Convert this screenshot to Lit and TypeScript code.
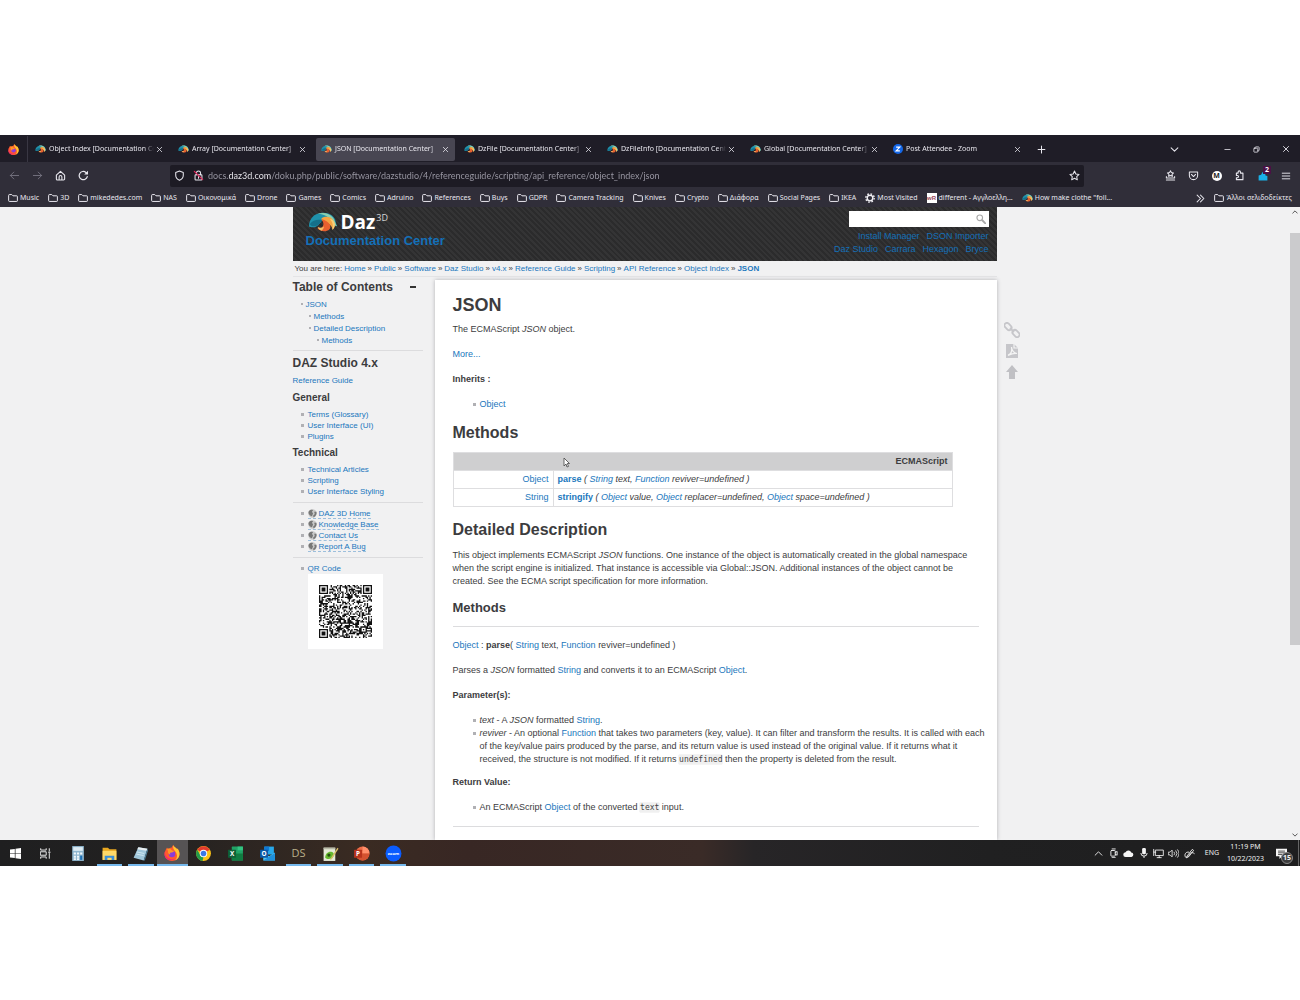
import { LitElement, html, svg, css, nothing } from "lit";
import { customElement } from "lit/decorators.js";

const reset = css`
  *, *::before, *::after { box-sizing: border-box; }
  button, input { font: inherit; color: inherit; border: 0; padding: 0; margin: 0; background: none; outline: 0; }
  button { display: flex; align-items: center; justify-content: center; }
  a { text-decoration: none; color: inherit; }
  svg { display: block; flex: none; }
`;

/* ---------- icons ---------- */

const line = (size: number, body: unknown, width = 1.3) => html`<svg width=${size} height=${size} viewBox="0 0 16 16"
  fill="none" stroke="currentColor" stroke-width=${width} stroke-linecap="round" stroke-linejoin="round" aria-hidden="true">${body}</svg>`;

const icons = {
  back: svg`<path d="M14 8H2M7 3L2 8l5 5"/>`,
  forward: svg`<path d="M2 8h12M9 3l5 5-5 5"/>`,
  home: svg`<path d="M2 7.500L8 2l6 5.500V13a1.500 1.500 0 0 1-1.500 1.500h-9A1.500 1.500 0 0 1 2 13zM6 14v-4a2 2 0 0 1 4 0v4"/>`,
  reload: svg`<path d="M13.500 9.500A6 6 0 1 1 11.500 3.500L13 5"/><path d="M14.500 1v5.500H9z" fill="currentColor" stroke="none"/>`,
  shield: svg`<path d="M8 1.500l5.500 2v4c0 3.500-2.500 6-5.500 7.300C5 13.500 2.500 11 2.500 7.500v-4z"/>`,
  lock: svg`<rect x="3" y="7" width="10" height="7.500" rx="1"/><path d="M5 7V4.500a3 3 0 0 1 6 0V7M8 9.500v2.500"/><path d="M2 2l12 12" stroke="#e2285c" stroke-width="1.800"/>`,
  star: svg`<path d="M8 1.500l2 4.300 4.600.6-3.400 3.200.9 4.700L8 12l-4.100 2.300.9-4.700L1.400 6.400 6 5.800z"/>`,
  save: svg`<path d="M8 1l1.400 2.800 3 .4-2.200 2.100.5 3L8 8 5.300 9.300l.5-3L3.600 4.200l3-.4zM2 9.500v2h12v-2M2 14.500h12"/>`,
  pocket: svg`<path d="M2 3h12v5a6 6 0 0 1-12 0zM5 6.500l3 3 3-3"/>`,
  puzzle: svg`<path d="M6 4.500V3a1.700 1.700 0 0 1 3.400 0v1.500H13V14H3.500v-2.800H5a1.600 1.600 0 0 0 0-3.200H3.500V4.500z"/>`,
  menu: svg`<path d="M2 3.500h12M2 8h12M2 12.500h12"/>`,
  close: svg`<path d="M3 3l10 10M13 3L3 13"/>`,
  plus: svg`<path d="M8 2v12M2 8h12"/>`,
  down: svg`<path d="M2 5l6 6 6-6"/>`,
  up: svg`<path d="M2 11l6-6 6 6"/>`,
  minimize: svg`<path d="M2 8h12"/>`,
  restore: svg`<rect x="2" y="5" width="9" height="9" rx="1"/><path d="M5 5V3.500A1.500 1.500 0 0 1 6.500 2h6A1.500 1.500 0 0 1 14 3.500v6a1.500 1.500 0 0 1-1.500 1.500H11"/>`,
  folder: svg`<path d="M1 3.500a1 1 0 0 1 1-1h4l2 2h6a1 1 0 0 1 1 1v7a1 1 0 0 1-1 1H2a1 1 0 0 1-1-1z"/>`,
  more: svg`<path d="M2 2l6 6-6 6M8 2l6 6-6 6"/>`,
};

const dazHead = (w: number, h: number) => html`<svg width=${w} height=${h} viewBox="0 0 60 40" aria-hidden="true">
  <path d="M2 30C2 12 14 2 29 1c14-1 24 6 27 14 1 4 2 8 4 14-6-1-8-6-12-12-7-5-14-5-19 0-5 7-10 15-20 14-3 0-5-1-7-1z" fill="#1f91ab"/>
  <path d="M20 3C32-1 45 2 52 11c3 4 5 12 8 18-5-1-6-4-9-8C45 10 34 4 20 3z" fill="#8ccfae"/>
  <path d="M4 24c6-8 15-10 25-8-5 8-9 13-16 13-5 0-8-2-9-5z" fill="#15708a"/>
  <path d="M28 12c12-7 25-1 27 12 1 6-2 9-4 12-1-5-3-9-8-12-4-2-9-3-12-6-2-2-3-3-3-6z" fill="#f6a443"/>
  <path d="M28 14c7 2 17 7 18 15 1 5-3 9-9 10-8 1-15-2-18-7 7 2 12-1 13-7 0-4-2-7-4-11z" fill="#e8602f"/>
  <path d="M20 30c4 3 9 3 13-1 0 4-2 7-5 9-4-1-7-4-8-8z" fill="#f2c067"/>
  <path d="M45 14c6 5 8 14 5 22 4-2 7-8 5-14-2-5-5-8-10-8z" fill="#f7cf77"/>
</svg>`;

const zoomFav = html`<svg width="10" height="10" viewBox="0 0 16 16" aria-hidden="true"><circle cx="8" cy="8" r="8" fill="#1467e8"/><path d="M5 5h6l-6 6h6" fill="none" stroke="#fff" stroke-width="1.800"/></svg>`;

const firefox = (s: number) => html`<svg width=${s} height=${s} viewBox="0 0 32 32" aria-hidden="true">
  <path d="M3 11c1-3 2-4 3-6 1 2 2 3 3 3 2-2 4-3 7-3 0-2 1-4 3-5 0 3 3 4 6 7 1 1 2 1 2 0 3 4 4 8 4 11 0 8-7 14-15 14S1 26 1 18c0-3 1-5 2-7z" fill="#ff5a2e"/>
  <path d="M19 0c0 3 3 4 6 7 1 1 2 1 2 0 3 4 4 8 4 11 0 6-4 11-9 13 4-4 5-9 3-14-2-6-9-8-6-17z" fill="#ffc531"/>
  <path d="M3 11c-1 3-2 6 1 11 3 6 12 8 18 5-3 5-21 6-21-9 0-3 1-5 2-7z" fill="#f5286e"/>
  <circle cx="16" cy="18" r="6.500" fill="#8a3bd8"/>
  <path d="M6 8c4-2 8 0 10 3l4 1c-1 3-4 3-6 3s-3 2-1 4c-4 0-6-4-5-7z" fill="#ff9626"/>
</svg>`;

/* ---------- browser window frame ---------- */

const tabs = [
  { title: "Object Index [Documentation Center]", kind: "daz" },
  { title: "Array [Documentation Center]", kind: "daz" },
  { title: "JSON [Documentation Center]", kind: "daz", active: true },
  { title: "DzFile [Documentation Center]", kind: "daz" },
  { title: "DzFileInfo [Documentation Center]", kind: "daz" },
  { title: "Global [Documentation Center]", kind: "daz" },
  { title: "Post Attendee - Zoom", kind: "zoom" },
];

const folders = ["Music", "3D", "mikededes.com", "NAS", "Οικονομικά", "Drone", "Games", "Comics", "Adruino",
  "References", "Buys", "GDPR", "Camera Tracking", "Knives", "Crypto", "Διάφορα", "Social Pages", "IKEA"];

@customElement("browser-chrome")
class BrowserChrome extends LitElement {
  static styles = [reset, css`
    :host { display: block; color: #e8e7ee; font: 7px/12px "Noto Sans", sans-serif; background: #302e39; }
    .strip { display: flex; align-items: center; height: 27px; padding-top: 1px; background: #1f1d27; }
    .view { width: 28px; height: 26px; border-right: 1px solid #393743; flex: none; }
    .tabs { display: flex; flex: 0 1 1001px; min-width: 0; }
    .tab { display: flex; align-items: center; flex: 1 1 0; min-width: 0; height: 23px; margin: 0 2px; padding: 0 5px; border-radius: 2px; }
    .tab.active { background: #484652; }
    .name { flex: 1; min-width: 0; justify-content: flex-start; gap: 3px; overflow: hidden; white-space: nowrap;
      -webkit-mask-image: linear-gradient(90deg, #000 calc(100% - 10px), transparent); }
    .x { width: 10px; height: 16px; flex: none; }
    .new { width: 24px; }
    .window { display: flex; margin-left: auto; align-items: center; }
    .window button { width: 29px; }
    .window .list { width: 30px; margin-right: 24px; }
    .tools { display: flex; align-items: center; height: 27px; padding: 0 3px; }
    .tools > button { width: 23px; }
    .tools > .dim { color: #777582; }
    .url { display: flex; align-items: center; flex: 1; height: 22px; margin: 0 75px 0 75px; padding: 0 4px; gap: 8px; background: #1d1b24; border-radius: 2px; }
    .url input { flex: 1; min-width: 0; font: 9px/16px Lato, sans-serif; height: 16px; margin-left: -4px; color: transparent;
      background: linear-gradient(90deg, #9c9aa6 21px, #f6f5fa 21px 63px, #9c9aa6 63px); -webkit-background-clip: text; background-clip: text; }
    .m { width: 10px; height: 10px; border-radius: 50%; background: #fff; color: #222; font-weight: 700; line-height: 10px; text-align: center; }
    .bell { position: relative; }
    .badge { position: absolute; top: -5px; right: 3px; width: 8px; height: 8px; line-height: 8px; background: #4b1145; color: #fff; font-weight: 700; }
    .marks { display: flex; align-items: center; height: 18px; padding: 0 8px; gap: 9px; white-space: nowrap; }
    .marks a { display: flex; align-items: center; gap: 2px; }
    .rest { margin-left: auto; display: flex; gap: 9px; }
    .wr { width: 10px; height: 10px; background: #fff; color: #9a4a5e; font: 700 6px/10px "Liberation Sans", sans-serif; text-align: center; }
  `];
  render() {
    return html`
      <div class="strip">
        <button class="view" aria-label="Firefox View">${firefox(11)}</button>
        <div class="tabs">
          ${tabs.map(t => html`<div class="tab ${t.active ? "active" : ""}">
            <button class="name">${t.kind === "daz" ? dazHead(11, 8) : zoomFav}<span>${t.title}</span></button>
            <button class="x" aria-label="Close tab">${line(7, icons.close, 1.8)}</button>
          </div>`)}
        </div>
        <button class="new" aria-label="New tab">${line(9, icons.plus, 1.8)}</button>
        <div class="window">
          <button class="list" aria-label="List all tabs">${line(9, icons.down, 1.8)}</button>
          <button aria-label="Minimize">${line(7, icons.minimize, 1.8)}</button>
          <button aria-label="Restore">${line(7, icons.restore, 1.8)}</button>
          <button aria-label="Close">${line(8, icons.close, 1.8)}</button>
        </div>
      </div>
      <div class="tools">
        <button class="dim" aria-label="Back">${line(11, icons.back)}</button>
        <button class="dim" aria-label="Forward">${line(11, icons.forward)}</button>
        <button aria-label="Home">${line(11, icons.home, 1.6)}</button>
        <button aria-label="Reload">${line(11, icons.reload, 1.8)}</button>
        <div class="url">
          ${line(11, icons.shield, 1.5)}${line(11, icons.lock, 1.5)}
          <input aria-label="Address" value="docs.daz3d.com/doku.php/public/software/dazstudio/4/referenceguide/scripting/api_reference/object_index/json">
          <button aria-label="Bookmark this page">${line(11, icons.star, 1.5)}</button>
        </div>
        <button aria-label="Save">${line(11, icons.save, 1.5)}</button>
        <button aria-label="Pocket">${line(11, icons.pocket, 1.5)}</button>
        <button aria-label="Account"><span class="m">M</span></button>
        <button aria-label="Extensions">${line(11, icons.puzzle, 1.6)}</button>
        <button class="bell" aria-label="Notifications"><svg width="10" height="10" viewBox="0 0 16 16" aria-hidden="true"><path d="M1 15V7l4-1 2-4h4l1 5 3 1v7z" fill="#19b1e8"/></svg><span class="badge">2</span></button>
        <button aria-label="Menu">${line(10, icons.menu, 1.5)}</button>
      </div>
      <nav class="marks" aria-label="Bookmarks">
        ${folders.map(f => html`<a href="#">${line(10, icons.folder, 1.6)}<span>${f}</span></a>`)}
        <a href="#"><svg width="10" height="10" viewBox="0 0 16 16" aria-hidden="true"><circle cx="8" cy="8" r="4.500" fill="none" stroke="#f2f1f6" stroke-width="2.200"/><circle cx="8" cy="8" r="6.700" fill="none" stroke="#f2f1f6" stroke-width="2.200" stroke-dasharray="2.600 2.660"/></svg><span>Most Visited</span></a>
        <a href="#"><span class="wr">wR</span><span>different - Αγγλοελλη...</span></a>
        <a href="#">${dazHead(11, 8)}<span>How make clothe "foll...</span></a>
        <div class="rest">
          <button aria-label="More bookmarks">${line(9, icons.more, 1.8)}</button>
          <a href="#">${line(10, icons.folder, 1.6)}<span>Άλλοι σελιδοδείκτες</span></a>
        </div>
      </nav>`;
  }
}

/* ---------- documentation page ---------- */

const QR = 41;
const inFinder = (x: number, y: number) => (x < 8 && y < 8) || (x >= QR - 8 && y < 8) || (x < 8 && y >= QR - 8);
const ring = (x: number, y: number, n: number) => {
  const d = Math.max(Math.abs(x), Math.abs(y));
  return d <= n && d !== n - 1;
};
function qrPath(): string {
  let seed = 20231, d = "";
  for (let y = 0; y < QR; y++) for (let x = 0; x < QR; x++) {
    seed = (seed * 1103515245 + 12345) % 2147483648;
    let on = ((seed >> 16) & 7) > 3;
    if (inFinder(x, y)) {
      const cx = x < 8 ? 3 : QR - 4, cy = y < 8 ? 3 : QR - 4;
      on = ring(x - cx, y - cy, 3);
    } else if (Math.abs(x - 34) <= 2 && Math.abs(y - 34) <= 2) on = ring(x - 34, y - 34, 2);
    else if (x === 6) on = y % 2 === 0;
    else if (y === 6) on = x % 2 === 0;
    if (on) d += `M${x} ${y}h1v1h-1z`;
  }
  return d;
}

const L = (t: string) => html`<a href="#">${t}</a>`;
const crumbs = ["Home", "Public", "Software", "Daz Studio", "v4.x", "Reference Guide", "Scripting", "API Reference", "Object Index"];
const globe = html`<svg width="9" height="9" viewBox="0 0 16 16" aria-hidden="true"><circle cx="8" cy="8" r="7.500" fill="#c9c9c9"/><path d="M1 5c2-4 6-4 8-3L7 5l2 3-2 5C4 12 0 9 1 5zM11 5l4 0c1 4-1 8-5 10l-1-3 3-3z" fill="#777"/></svg>`;

@customElement("doc-page")
class DocPage extends LitElement {
  static styles = [reset, css`
    :host { display: flex; min-height: 0; overflow: hidden; background: #f1f1f2; color: #3c3c3e; font: 9px/13px "Liberation Sans", Arial, sans-serif; }
    a { color: #2177bd; }
    .view { flex: 1; min-width: 0; display: grid; grid-template-columns: 1fr minmax(0, 704px) 1fr; }
    .site { grid-column: 2; display: flex; flex-direction: column; }
    .head { display: flex; justify-content: space-between; height: 54px; padding: 4px 8px 0 13px; background: repeating-linear-gradient(45deg, #2b2b2c 0 2px, #343435 2px 4px); }
    .head a { color: #1470b8; }
    .logo { display: flex; align-items: center; height: 22px; padding-left: 2px; color: #fff; }
    .daz { margin-left: 4px; font: 700 19px/22px "Open Sans", sans-serif; }
    .sup { align-self: flex-start; margin-left: 1px; font: 9px/14px "Open Sans", sans-serif; color: #d5d5d5; }
    .center { font-size: 13px; line-height: 15px; font-weight: 700; }
    .links { display: flex; flex-direction: column; align-items: flex-end; }
    .search { display: flex; width: 140px; height: 16px; margin-bottom: 3px; background: #fff; }
    .search input { flex: 1; min-width: 0; color: #333; padding: 0 4px; }
    .search button { width: 16px; color: #a8a8a8; }
    .row { display: flex; gap: 7px; }
    .crumbs { display: flex; gap: 2px; height: 16px; padding-left: 2px; font-size: 8px; line-height: 16px; border-bottom: 1px solid #e4e4e6; white-space: nowrap; }
    .cols { flex: 1; display: flex; min-height: 0; padding-top: 3px; }
    .side { width: 130px; margin-right: 12px; font-size: 8px; line-height: 11px; flex: none; }
    .side h2 { margin: 0; font-size: 12px; line-height: 14px; display: flex; justify-content: space-between; }
    .side h3 { margin: 5px 0; font-size: 10px; line-height: 12px; }
    .side ul { list-style: none; margin: 0; padding: 0 0 0 15px; }
    .side li::before, .body li::before { content: ""; display: inline-block; width: 3px; height: 3px; margin: 0 4px 1px -7px; background: #b0b0b4; vertical-align: middle; }
    .side .toc { padding: 5px 0 3px 13px; line-height: 12px; border-bottom: 1px solid #dcdcde; margin-bottom: 5px; }
    .side .toc ul { padding-left: 8px; }
    .side .toc li::before { width: 2px; height: 2px; margin: 0 3px 1px -5px; }
    .side .guide { margin: 5px 0; line-height: 12px; }
    .side .sep { border-top: 1px solid #dcdcde; margin-top: 5px; padding-top: 5px; }
    .ext { display: inline-flex; gap: 2px; height: 11px; align-items: center; border-bottom: 1px dashed #9dbfdc; vertical-align: top; }
    .minus { width: 20px; }
    .minus i { width: 6px; height: 2px; background: #333; }
    .qr { margin-left: 15px; background: #fff; width: 75px; }
    .body { position: relative; flex: 1; min-width: 0; padding: 15px 10px 0 18px; background: #fff; box-shadow: 0 0 4px #b0b0b4; }
    .body h1, .body h2, .body h3, .body p { margin: 0; }
    .body h1 { font-size: 18px; line-height: 20px; margin-bottom: 8px; }
    .body h2 { font-size: 16px; line-height: 18px; margin: 13px 0 10px; }
    .body h3 { font-size: 13px; line-height: 16px; margin: 12px 0 10px; }
    .body p, .body ul { margin-bottom: 12px; }
    .body ul { list-style: none; padding-left: 27px; margin-top: 0; }
    .body ul.tight { margin-bottom: 10px; }
    .body hr { border: 0; height: 1px; background: #dcdcde; margin: 0 8px 12px 0; }
    code { font: 8px/11px "DejaVu Sans Mono", monospace; background: #f0f0f0; box-shadow: 0 0 1px #bbb; color: #444; }
    table { width: 95%; max-width: 500px; border-collapse: collapse; margin-bottom: 14px; }
    th { background: #cfcfd0; text-align: right; font-weight: 700; }
    td, th { height: 18px; padding: 0 4px; border: 1px solid #dedee0; line-height: 13px; }
    td:first-child { width: 100px; text-align: right; }
    .sig { font-style: italic; }
    .sig b { font-style: normal; }
    .cursor { position: absolute; left: 128px; top: 177px; }
    .tools { display: flex; flex-direction: column; gap: 5px; padding: 115px 0 0 7px; }
    .bar { display: flex; flex-direction: column; width: 11px; align-items: center; color: #555; }
    .bar button { height: 10px; width: 11px; }
    .track { flex: 1; width: 11px; padding: 16px 0 0 1px; }
    .thumb { height: 69%; background: #cbcbcd; }
  `];
  render() {
    return html`
      <div class="view">
        <div class="site">
          <header class="head">
            <div>
              <div class="logo">${dazHead(29, 20)}<span class="daz">Daz</span><span class="sup">3D</span></div>
              <a class="center" href="#">Documentation Center</a>
            </div>
            <div class="links">
              <form class="search"><input type="text" aria-label="Search"><button type="button" aria-label="Search">
                ${line(10, svg`<circle cx="6" cy="6" r="4.500"/><path d="M10 10l5 5" stroke-width="3"/>`, 1.8)}</button></form>
              <div class="row">${L("Install Manager")}${L("DSON Importer")}</div>
              <div class="row">${L("Daz Studio")}${L("Carrara")}${L("Hexagon")}${L("Bryce")}</div>
            </div>
          </header>
          <nav class="crumbs" aria-label="Breadcrumb"><span>You are here:</span>${crumbs.map(c => html`${L(c)}<span>»</span>`)}<b>${L("JSON")}</b></nav>
          <div class="cols">
            <aside class="side">
              <h2>Table of Contents <button class="minus" aria-label="Collapse"><i></i></button></h2>
              <ul class="toc"><li>${L("JSON")}<ul><li>${L("Methods")}</li><li>${L("Detailed Description")}<ul><li>${L("Methods")}</li></ul></li></ul></li></ul>
              <h2>DAZ Studio 4.x</h2>
              <div class="guide">${L("Reference Guide")}</div>
              <h3>General</h3>
              <ul>${["Terms (Glossary)", "User Interface (UI)", "Plugins"].map(t => html`<li>${L(t)}</li>`)}</ul>
              <h3>Technical</h3>
              <ul>${["Technical Articles", "Scripting", "User Interface Styling"].map(t => html`<li>${L(t)}</li>`)}</ul>
              <div class="sep"><ul>${["DAZ 3D Home", "Knowledge Base", "Contact Us", "Report A Bug"].map(t => html`<li><a class="ext" href="#">${globe}${t}</a></li>`)}</ul></div>
              <div class="sep"><ul><li>${L("QR Code")}</li></ul>
                <div class="qr"><svg width="75" height="75" viewBox="-8.500 -8.500 58 58" role="img" aria-label="QR Code"><path d=${qrPath()} fill="#111"/></svg></div></div>
            </aside>
            <main class="body">
              <h1>JSON</h1>
              <p>The ECMAScript <em>JSON</em> object.</p>
              <p>${L("More...")}</p>
              <p><b>Inherits :</b></p>
              <ul><li>${L("Object")}</li></ul>
              <h2>Methods</h2>
              <table>
                <tr><th colspan="2">ECMAScript</th></tr>
                <tr><td>${L("Object")}</td><td class="sig"><b>${L("parse")}</b> ( ${L("String")} text, ${L("Function")} reviver=undefined )</td></tr>
                <tr><td>${L("String")}</td><td class="sig"><b>${L("stringify")}</b> ( ${L("Object")} value, ${L("Object")} replacer=undefined, ${L("Object")} space=undefined )</td></tr>
              </table>
              <h2>Detailed Description</h2>
              <p>This object implements ECMAScript <em>JSON</em> functions. One instance of the object is automatically created in the global namespace when the script engine is initialized. That instance is accessible via Global::JSON. Additional instances of the object cannot be created. See the ECMA script specification for more information.</p>
              <h3>Methods</h3>
              <hr>
              <p>${L("Object")} : <b>parse</b>( ${L("String")} text, ${L("Function")} reviver=undefined )</p>
              <p>Parses a <em>JSON</em> formatted ${L("String")} and converts it to an ECMAScript ${L("Object")}.</p>
              <p><b>Parameter(s):</b></p>
              <ul class="tight">
                <li><em>text</em> - A <em>JSON</em> formatted ${L("String")}.</li>
                <li><em>reviver</em> - An optional ${L("Function")} that takes two parameters (key, value). It can filter and transform the results. It is called with each of the key/value pairs produced by the parse, and its return value is used instead of the original value. If it returns what it received, the structure is not modified. If it returns <code>undefined</code> then the property is deleted from the result.</li>
              </ul>
              <p><b>Return Value:</b></p>
              <ul><li>An ECMAScript ${L("Object")} of the converted <code>text</code> input.</li></ul>
              <hr>
              <svg class="cursor" width="7" height="11" viewBox="0 0 7 11" aria-hidden="true"><path d="M1 1v8l2-2 1 3 1.500-.6L4.300 6.500h2.200z" fill="#fff" stroke="#444" stroke-width=".8"/></svg>
            </main>
          </div>
        </div>
        <div class="tools">
          <svg width="16" height="16" viewBox="0 0 16 16" fill="none" stroke="#c6c6ca" stroke-width="1.800" aria-hidden="true"><rect x="0" y="2" width="8" height="5" rx="2.500" transform="rotate(45 4 4.500)"/><rect x="8" y="9" width="8" height="5" rx="2.500" transform="rotate(45 12 11.500)"/><path d="M6 6l4 4"/></svg>
          <svg width="16" height="16" viewBox="0 0 16 16" aria-hidden="true"><path d="M2 1h8l4 4v10H2z" fill="#c6c6ca"/><path d="M10 1v4h4M4 12c4-1 4-5 3.500-8C8 9 10 10 13 10.500 9 10 7 11 4 12.500" fill="none" stroke="#f4f4f4" stroke-width="1.200"/></svg>
          <svg width="16" height="16" viewBox="0 0 16 16" aria-hidden="true"><path d="M8 1l6 7h-3v7H5V8H2z" fill="#c0c0c4"/></svg>
        </div>
      </div>
      <div class="bar">
        <button aria-label="Scroll up">${line(6, icons.up, 2.6)}</button>
        <div class="track"><div class="thumb"></div></div>
        <button aria-label="Scroll down">${line(6, icons.down, 2.6)}</button>
      </div>`;
  }
}

/* ---------- taskbar ---------- */

const app = (body: unknown) => html`<svg width="17" height="17" viewBox="0 0 32 32" aria-hidden="true">${body}</svg>`;
const label = (x: number, y: number, size: number, text: string, fill = "#fff") =>
  svg`<text x=${x} y=${y} font-size=${size} font-weight="700" text-anchor="middle" fill=${fill} font-family="Open Sans, sans-serif">${text}</text>`;

const apps = [
  { name: "Calculator", icon: app(svg`<rect x="6" y="2" width="22" height="28" fill="#8fb6cf"/><rect x="8" y="4" width="18" height="7" fill="#dcebf3"/><path d="M9 14h4v4H9zM15 14h4v4h-4zM21 14h4v4h-4zM9 20h4v4H9zM15 20h4v4h-4zM9 25h4v3H9zM15 25h4v3h-4z" fill="#f2f8fb"/><path d="M21 20h4v8h-4z" fill="#1d6fb4"/>`) },
  { name: "File Explorer", open: true, icon: app(svg`<path d="M3 5h10l3 3h13v20H3z" fill="#e9a820"/><path d="M3 11h26v17H3z" fill="#ffd968"/><path d="M7 28v-8h18v8h-5v-4h-8v4z" fill="#3a8fd8"/>`) },
  { name: "Notepad", open: true, icon: app(svg`<path d="M12 4l17 3-7 22-19-5z" fill="#9fc6da"/><path d="M12 4l17 3-2 4-17-3z" fill="#e8eef1"/><path d="M29 7l1 4-6 18-2 0z" fill="#4f7f99"/><path d="M9 13l14 3M8 17l14 3" stroke="#d9edf5" stroke-width="1.500"/>`) },
  { name: "Firefox", open: true, active: true, icon: firefox(16) },
  { name: "Chrome", icon: app(svg`<circle cx="16" cy="16" r="14" fill="#fbc116"/><path d="M16 16L4 9a14 14 0 0 1 24 0z" fill="#e33b2e"/><path d="M4 9l8 13 4 1-2 7A14 14 0 0 1 4 9z" fill="#229a4a"/><circle cx="16" cy="16" r="7" fill="#fff"/><circle cx="16" cy="16" r="5.300" fill="#3b78e7"/>`) },
  { name: "Excel", icon: app(svg`<rect x="9" y="3" width="21" height="26" rx="1" fill="#21a366"/><path d="M9 16h21v13H9z" fill="#107c41"/><path d="M20 3h10v7H20z" fill="#33c481"/><rect x="2" y="9" width="15" height="15" rx="1" fill="#0e6237"/>${label(9.500, 21, 12, "X")}`) },
  { name: "Outlook", icon: app(svg`<path d="M10 3h18v15H10z" fill="#28a8ea"/><path d="M10 3h9v8h-9z" fill="#0f78d4"/><path d="M8 14l11 7 11-7v15H8z" fill="#50c8f5"/><path d="M8 29l22-14v14z" fill="#1e8fdb"/><rect x="2" y="9" width="15" height="15" rx="1" fill="#0a5aa8"/>${label(9.500, 21, 12, "O")}`) },
  { name: "Daz Studio", open: true, icon: html`<span class="ds">DS</span>` },
  { name: "Notepad++", open: true, icon: app(svg`<path d="M3 5h22v25H3z" fill="#e6ead8"/><path d="M3 5h22v3H3z" fill="#b8bba8"/><path d="M6 24c0-9 7-13 13-11 5 2 4 9-1 12-4 2-9 2-12-1z" fill="#66b82e"/><circle cx="13" cy="19" r="3" fill="#274e12"/><path d="M29 5L17 24l-2 5 4-3L31 7z" fill="#d9c06a"/>`) },
  { name: "PowerPoint", open: true, icon: app(svg`<circle cx="18" cy="16" r="13" fill="#ed6c47"/><path d="M18 3a13 13 0 0 1 13 13H18z" fill="#ff8f6b"/><path d="M5 16h26a13 13 0 0 1-26 0z" fill="#d35230"/><rect x="2" y="9" width="15" height="15" rx="1" fill="#b7331b"/>${label(9.500, 21, 12, "P")}`) },
  { name: "Zoom", open: true, icon: app(svg`<circle cx="16" cy="16" r="15" fill="#0b5cff"/>${label(16, 18, 8, "zoom")}`) },
];

@customElement("task-bar")
class TaskBar extends LitElement {
  static styles = [reset, css`
    :host { display: flex; height: 26px; color: #f0f0f0; font: 7px/12px "Noto Sans", sans-serif;
      background: linear-gradient(90deg, #1f1f20 0, #222121 12%, #3a2b22 28%, #382724 36%, #3a2b27 54%, #272527 58%, #202021 76%, #1e1e1f 100%); }
    .sys { width: 30px; height: 26px; }
    .apps { display: grid; grid-template-columns: repeat(11, 1fr); width: 347px; margin-left: 2px; }
    .app { height: 26px; border-bottom: 2px solid transparent; margin: 0 3px; padding-top: 2px; }
    .open { border-color: #76b9ed; }
    .active { margin: 0; background: #565354; }
    .ds { font: 11px/14px "Open Sans", sans-serif; color: #b9b08a; }
    .tray { display: flex; align-items: center; margin-left: auto; }
    .tray button { width: 15px; height: 26px; }
    .tray .pen { width: 17px; }
    .tray .lang { width: 28px; }
    .tray .clock { width: 39px; flex-direction: column; }
    .tray .note { position: relative; width: 33px; }
    .count { position: absolute; left: 16px; top: 12px; width: 12px; height: 12px; border-radius: 50%; background: #3d3d3e; border: 1px solid #888; font-weight: 700; line-height: 10px; }
    .edge { width: 2px; height: 26px; border-left: 1px solid #666; }
  `];
  render() {
    return html`
      <button class="sys" aria-label="Start"><svg width="11" height="11" viewBox="0 0 16 16" aria-hidden="true"><path d="M0 2.300l7-1v6.200H0zM8 1.200L16 0v7.500H8zM0 8.500h7v6.200l-7-1zM8 8.500h8V16l-8-1.200z" fill="#fff"/></svg></button>
      <button class="sys" aria-label="Task View">${line(11, svg`<path d="M1 1v2h8V1M1 15v-2h8v2M1 5.500h8v5H1zM13.500 1v3M13.500 8v7" /><path d="M12.800 6h1.500" stroke-width="2"/>`, 1.4)}</button>
      <div class="apps">${apps.map(a => html`<button class="app ${a.open ? "open" : ""} ${a.active ? "active" : ""}" aria-label=${a.name}>${a.icon ?? nothing}</button>`)}</div>
      <div class="tray">
        <button aria-label="Show hidden icons">${line(9, icons.up, 1.6)}</button>
        <button aria-label="Meet Now">${line(10, svg`<rect x="3" y="4" width="7" height="9" rx="1"/><path d="M10 7l3-1.500v6L10 10M5 1.500h5M5 15.500h5"/>`, 1.5)}</button>
        <button aria-label="OneDrive"><svg width="11" height="11" viewBox="0 0 16 16" aria-hidden="true"><path d="M4 13a3.500 3.500 0 0 1-.3-7A4.500 4.500 0 0 1 12 6.500a3.300 3.300 0 0 1 .5 6.500z" fill="#f5f5f5"/></svg></button>
        <button aria-label="Microphone"><svg width="10" height="10" viewBox="0 0 16 16" aria-hidden="true"><rect x="5" y="0" width="6" height="10" rx="2" fill="#f5f5f5"/><path d="M3 8a5 5 0 0 0 10 0M8 13v3" stroke="#f5f5f5" stroke-width="1.500" fill="none"/></svg></button>
        <button aria-label="Network">${line(11, svg`<path d="M4 3h11v8H4zM9 11v3M6 14h6M1 2v4h3M1 6v5"/>`, 1.3)}</button>
        <button aria-label="Volume">${line(11, svg`<path d="M1 6h2l3-3v10L3 10H1zM9 6a3 3 0 0 1 0 4M11.500 4a6 6 0 0 1 0 8M14 2.500a8 8 0 0 1 0 11"/>`, 1.2)}</button>
        <button class="pen" aria-label="Pen">${line(11, svg`<path d="M5 11l7-9 2 1.500-7 9-3 1zM7 6c-4-1-7 3-5 7 2 3 5-1 6-4s5-3 7-1"/>`, 1.3)}</button>
        <button class="lang">ENG</button>
        <button class="clock"><span>11:19 PM</span><span>10/22/2023</span></button>
        <button class="note" aria-label="Notifications"><svg width="11" height="11" viewBox="0 0 16 16" aria-hidden="true"><path d="M0 1h16v11H9l-4 4v-4H0z" fill="#f5f5f5"/><path d="M3 4.500h10M3 7h10M3 9.500h6" stroke="#333" stroke-width="1.200"/></svg><span class="count">15</span></button>
        <span class="edge"></span>
      </div>`;
  }
}

@customElement("app-root")
class AppRoot extends LitElement {
  static styles = css`
    :host { display: block; background: #fff; }
    .desktop { box-sizing: border-box; display: grid; grid-template-rows: auto minmax(0, 1fr) auto; height: 100vh; padding: 135px 0 134px; }
  `;
  render() {
    return html`<div class="desktop"><browser-chrome></browser-chrome><doc-page></doc-page><task-bar></task-bar></div>`;
  }
}
